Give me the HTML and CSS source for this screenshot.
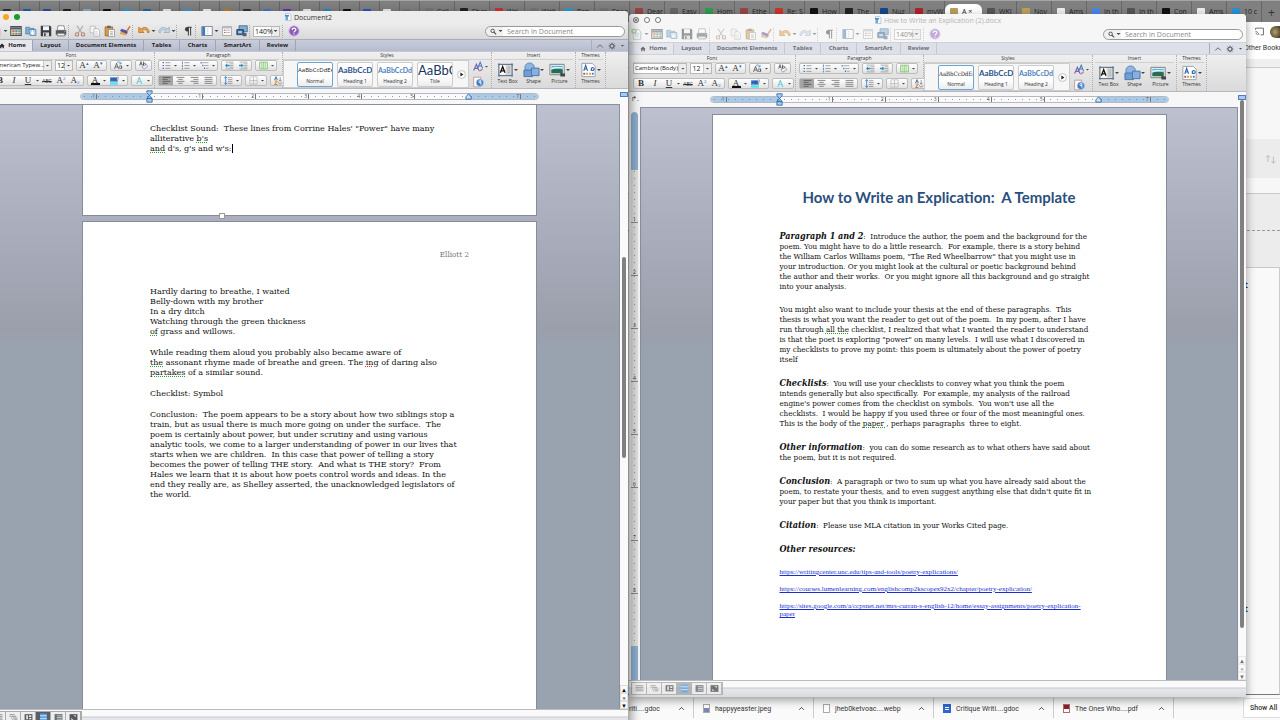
FILE: index.html
```html
<!DOCTYPE html>
<html lang="en">
<head>
    <meta charset="UTF-8">
    <meta name="viewport" content="width=device-width, initial-scale=1.0">
    <title>Document2</title>
    <link rel="stylesheet" href="styles.css">
</head>
<body>
    <!-- Icon sprite -->
    <svg class="sprite" aria-hidden="true">
        <symbol id="i-new" viewBox="0 0 16 16"><path d="M3 2h7l3 3v10H3z" fill="#fff" stroke="#7d8894"/><path d="M5 7h6M5 9h6M5 11h6" stroke="#9fb4c8"/><circle cx="4" cy="4" r="3.5" fill="#4fae45"/><path d="M4 2v4M2 4h4" stroke="#fff" stroke-width="1.2"/></symbol>
        <symbol id="i-grid" viewBox="0 0 16 16"><path d="M1 2h14v12H1z" fill="#e9e4d8" stroke="#4a4f57" stroke-width="1.4"/><path d="M1.5 3h13v3h-13z" fill="#555d68"/><path d="M3 7h3v2.500H3zM7 10.500h3V13H7z" fill="#cf6a35"/><path d="M7 7h3v2.500H7zM11 10.500h3V13h-3z" fill="#3f8fc4"/><path d="M11 7h3v2.500h-3zM3 10.500h3V13H3z" fill="#6da24b"/></symbol>
        <symbol id="i-open" viewBox="0 0 16 16"><path d="M1 3h5l1 1.500h5V12H1z" fill="#7fb2d9" stroke="#4d7ca6"/><path d="M5 6h9.500v8H7z" fill="#b4d3ea" stroke="#4d7ca6"/><path d="M10 7v5M8 10l2 2.500 2-2.500" fill="none" stroke="#fff" stroke-width="1.500"/></symbol>
        <symbol id="i-save" viewBox="0 0 16 16"><path d="M1 1h12.500L15 2.500V15H1z" fill="#3a3d42"/><path d="M4 1.500h8V7H4z" fill="#f5f5f5"/><path d="M4 10h8v5H4z" fill="#d7d7d7"/><path d="M5.500 11h2v3.500h-2z" fill="#333"/></symbol>
        <symbol id="i-print" viewBox="0 0 16 16"><path d="M4 1h8l1 6H3z" fill="#fff" stroke="#777"/><path d="M1 7h14v6H1z" fill="#54585e"/><path d="M3 11h10v3.500H3z" fill="#eee" stroke="#666"/><path d="M12 8.500h2" stroke="#66d05b"/></symbol>
        <symbol id="i-cut" viewBox="0 0 16 16"><path d="M4 1l6.500 10M12 1L5.500 11" stroke="#a7a7a7" stroke-width="1.500" fill="none"/><circle cx="4" cy="12.500" r="2.200" fill="none" stroke="#b9836f" stroke-width="1.500"/><circle cx="12" cy="12.500" r="2.200" fill="none" stroke="#b9836f" stroke-width="1.500"/></symbol>
        <symbol id="i-copy" viewBox="0 0 16 16"><path d="M1.500 1.500h7v9h-7z" fill="#f4f4f4" stroke="#b3b3b3"/><path d="M6.500 5h5l2.500 2.500V15H6.500z" fill="#fff" stroke="#a8a8a8"/><path d="M8 9h4M8 11h4M8 13h4" stroke="#c9c9c9"/></symbol>
        <symbol id="i-paste" viewBox="0 0 16 16"><path d="M1.500 2.500h10v12h-10z" fill="#d69a45" stroke="#91662a"/><path d="M4 1h5v3H4z" fill="#666"/><path d="M6 6h8v9.500H6z" fill="#fff" stroke="#888"/><path d="M8 9h4M8 11h4M8 13h4" stroke="#999"/></symbol>
        <symbol id="i-brush" viewBox="0 0 16 16"><path d="M10 7l4-6 1.500 1L12 8z" fill="#c8762d"/><path d="M3 6l8 1 1 3-3 4-8-2z" fill="#e3a651"/><path d="M2 7l9 4M3 6l8 3" stroke="#5750a8" stroke-width="2"/></symbol>
        <symbol id="i-undo" viewBox="0 0 16 16"><path d="M1 3v7h7L5.500 7.500C8 5 12 6 13 10.500l2-1C14 3 8 1.500 4 5.500z" fill="#eca24a" stroke="#b36d20"/></symbol>
        <symbol id="i-redo" viewBox="0 0 16 16"><path d="M15 3v7H8l2.500-2.500C8 5 4 6 3 10.500l-2-1C2 3 8 1.500 12 5.500z" fill="#c3d6e2" stroke="#92aabb"/></symbol>
        <symbol id="i-pilcrow" viewBox="0 0 16 16"><path d="M7 3h6M8.500 3v11M11.500 3v11" stroke="#3c3c3c" stroke-width="1.300"/><path d="M8.500 2.500H7a3 3 0 0 0 0 6h1.500z" fill="#3c3c3c"/></symbol>
        <symbol id="i-sidebar" viewBox="0 0 16 16"><path d="M1 2h14v12H1z" fill="#fff" stroke="#5a6f8c"/><path d="M1.500 2.500h4v11h-4z" fill="#4679b5"/><path d="M8 5h2M8 8h2M8 11h2" stroke="#9fb4c8"/></symbol>
        <symbol id="i-toolbox" viewBox="0 0 16 16"><path d="M2 2h12v12H2z" fill="#f8f8f8" stroke="#999"/><path d="M2 2h12v2.500H2z" fill="#b9bec6"/><path d="M4 7h2M4 10h2" stroke="#c75b4e" stroke-width="1.500"/><path d="M7 7h5M7 10h5" stroke="#aaa"/></symbol>
        <symbol id="i-media" viewBox="0 0 16 16"><path d="M4 1h11v8H4z" fill="#7eaed9" stroke="#3f5c7d"/><path d="M1 6h9v7H1z" fill="#39669c" stroke="#27405f"/><path d="M9 10l5 1v4H9z" fill="#4d5f73"/><path d="M3 8h5v3H3z" fill="#a7cbe8"/></symbol>
        <symbol id="i-help" viewBox="0 0 16 16"><circle cx="8" cy="8" r="7" fill="#8d5db8" stroke="#d8c7e6" stroke-width="1.500"/><path d="M5.500 6.500C5.500 3.500 10.500 3.500 10.500 6.300 10.500 8 8 8 8 10M8 11.300v1.500" stroke="#fff" stroke-width="1.600" fill="none"/></symbol>
        <symbol id="i-lens" viewBox="0 0 16 16"><circle cx="6" cy="6.500" r="4" fill="none" stroke="currentColor" stroke-width="2"/><path d="M9 9.500l5 5" stroke="currentColor" stroke-width="2.400"/></symbol>
        <symbol id="i-doc" viewBox="0 0 16 16"><path d="M3 1h8l3 3v11H3z" fill="#f4f9fd" stroke="#8aa2b8"/><path d="M2 4h8v3H7.500v7h-3V7H2z" fill="#3f8cca"/></symbol>
        <symbol id="i-home" viewBox="0 0 16 16"><path d="M8 1l7 7h-2v6H9.500v-4h-3v4H3V8H1z" fill="currentColor"/></symbol>
        <symbol id="i-gear" viewBox="0 0 16 16"><circle cx="8" cy="8" r="4" fill="none" stroke="currentColor" stroke-width="2.500"/><path d="M8 1v3M8 12v3M1 8h3M12 8h3M3 3l2 2M11 11l2 2M13 3l-2 2M5 11l-2 2" stroke="currentColor" stroke-width="1.600"/></symbol>
        <symbol id="i-up" viewBox="0 0 16 16"><path d="M2.500 11L8 5.500l5.500 5.500" fill="none" stroke="currentColor" stroke-width="2"/></symbol>
        <symbol id="i-case" viewBox="0 0 16 16"><path d="M1 14L4.500 4 8 14M2.500 10.500h4M13.500 8v6M13.500 11a2.300 2.300 0 1 0 0 .1" fill="none" stroke="#444" stroke-width="1.300"/><path d="M5 3c3-3 6-1 7 1.500M12.500 1.500V5H9" stroke="#3c83c9" stroke-width="1.300" fill="none"/></symbol>
        <symbol id="i-clear" viewBox="0 0 16 16"><path d="M1 8L3.500 1 6 8M2 5.500h3M8 1v7M8 6a2 2 0 1 1 0 .1" fill="none" stroke="#333" stroke-width="1.200"/><path d="M5 10l8-4 2.500 4-7 4.500z" fill="#eef1f8" stroke="#68739a"/></symbol>
        <symbol id="i-hilite" viewBox="0 0 16 16"><path d="M0 2h13v8H0z" fill="#4f85d6"/><path d="M2 8l1.500-4L5 8M6.500 4v4h2V4zM12 4.500h-2v3h2" stroke="#173e7e" fill="none"/><path d="M13 1l2 1-2 8" stroke="#666" fill="none"/><path d="M0 11h14v4.500H0z" fill="#52e4ec"/></symbol>
        <symbol id="i-bullets" viewBox="0 0 16 16"><path d="M1 3h2.500M1 8h2.500M1 13h2.500" stroke="#3b72b0" stroke-width="2.200"/><path d="M6 3h9M6 8h9M6 13h9" stroke="#777" stroke-width="1.200"/></symbol>
        <symbol id="i-numbers" viewBox="0 0 16 16"><path d="M2.500 1v4M2.500 6.500v4M2.500 12v3" stroke="#3b72b0" stroke-width="1.500"/><path d="M6 3h9M6 8h9M6 13h9" stroke="#777" stroke-width="1.200"/></symbol>
        <symbol id="i-multi" viewBox="0 0 16 16"><path d="M1 3h2M4 8h2M7 13h2" stroke="#3b72b0" stroke-width="2.500"/><path d="M4 3h11M7.500 8H15M11 13h4" stroke="#888" stroke-width="1.200"/></symbol>
        <symbol id="i-outdent" viewBox="0 0 16 16"><path d="M1 2h14M8 5h7M8 8h7M8 11h7M1 14h14" stroke="#777"/><path d="M0 8l4-4v2.500h4v3H4V12z" fill="#2f8fc0"/></symbol>
        <symbol id="i-indent" viewBox="0 0 16 16"><path d="M1 2h14M8 5h7M8 8h7M8 11h7M1 14h14" stroke="#777"/><path d="M8 8L4 4v2.500H0v3h4V12z" fill="#2f8fc0"/></symbol>
        <symbol id="i-columns" viewBox="0 0 16 16"><path d="M1 2h14v12H1z" fill="#dff3d8" stroke="#58a54c"/><path d="M8 2v12M5 2v12M11 2v12" stroke="#7bbf70"/></symbol>
        <symbol id="i-left" viewBox="0 0 16 16"><path d="M1 2.500h14M1 6h9M1 9.500h14M1 13h9" stroke="#444" stroke-width="1.200"/></symbol>
        <symbol id="i-center" viewBox="0 0 16 16"><path d="M1 2.500h14M4 6h8M1 9.500h14M4 13h8" stroke="#555" stroke-width="1.200"/></symbol>
        <symbol id="i-right" viewBox="0 0 16 16"><path d="M1 2.500h14M6 6h9M1 9.500h14M6 13h9" stroke="#555" stroke-width="1.200"/></symbol>
        <symbol id="i-justify" viewBox="0 0 16 16"><path d="M1 2.500h14M1 6h14M1 9.500h14M1 13h14" stroke="#555" stroke-width="1.200"/></symbol>
        <symbol id="i-spacing" viewBox="0 0 16 16"><path d="M7 3h8M7 6.500h8M7 10h8M7 13.500h8" stroke="#777" stroke-width="1.200"/><path d="M3 1v14M0.500 4L3 1l2.500 3M0.500 12L3 15l2.500-3" stroke="#3177c4" stroke-width="1.500" fill="none"/></symbol>
        <symbol id="i-borders" viewBox="0 0 16 16"><path d="M1.500 1.500h13v13h-13zM8 1.500v13M1.500 8h13" fill="none" stroke="#aaa"/></symbol>
        <symbol id="i-sort" viewBox="0 0 16 16"><path d="M1 7l2.500-6L6 7M2 5h3" stroke="#2e68b1" stroke-width="1.500" fill="none"/><path d="M1 9h5l-5 6h5" stroke="#d07b28" stroke-width="1.700" fill="none"/><path d="M11 2v7M8 11c0 4 6 4 6 0M9 7l2 2.500L13 7" stroke="#777" stroke-width="1.300" fill="none"/></symbol>
        <symbol id="i-styles" viewBox="0 0 16 16"><path d="M1 13L5 4l3.500 9M2.500 10H7" stroke="#7c63b4" stroke-width="1.700" fill="none"/><path d="M7 9l3.500-8L14 10M8 6.500h5" stroke="#3e7dc1" stroke-width="1.500" fill="none"/><path d="M9 14l5-3" stroke="#c47ab0" stroke-width="2"/></symbol>
        <symbol id="i-pane" viewBox="0 0 16 16"><path d="M1 1h10v14H1z" fill="#fff" stroke="#b77" /><circle cx="10" cy="9" r="5.500" fill="#3b7cc4" stroke="#c9dcf0"/><path d="M11.500 6v6M11.500 6H10a1.500 1.500 0 0 0 0 3h1.500" stroke="#fff" stroke-width="1.300" fill="none"/></symbol>
        <symbol id="i-textbox" viewBox="0 0 18 16"><path d="M2 2h14v12H2z" fill="#d5d7da" stroke="#555c66"/><path d="M3 3h6v10H3z" fill="#fff"/><path d="M3.500 11L6 4.500 8.500 11M4.500 9h3" stroke="#111" stroke-width="1.400" fill="none"/><path d="M11 5h3M11 7h3M11 9h3M11 11h3" stroke="#aaa"/><path d="M1 1h2v2H1zM15 1h2v2h-2zM1 13h2v2H1zM15 13h2v2h-2z" fill="#4a7fc0"/></symbol>
        <symbol id="i-shape" viewBox="0 0 18 16"><circle cx="7" cy="5.500" r="5" fill="#8fb6e2" stroke="#5d86b8"/><path d="M1 8h9v7H1z" fill="#6f9dd4" stroke="#4a74a8"/><path d="M9 6h8v8H9z" fill="#86b0e0" stroke="#4a74a8"/></symbol>
        <symbol id="i-picture" viewBox="0 0 18 16"><path d="M1 2h15v11H1z" fill="#fff" stroke="#777"/><path d="M2.500 3.500h12v8h-12z" fill="#58b3e3"/><path d="M2.500 8c4-2 8-2 12-.5v4h-12z" fill="#2b6c4b"/><path d="M2.500 6.500c4-2 8 0 12-1" stroke="#eaf8ff" stroke-width="1.500" fill="none"/><path d="M12 11l5 1v3h-5z" fill="#444"/></symbol>
        <symbol id="i-themes" viewBox="0 0 18 16"><path d="M2 1h11l3 3v11H2z" fill="#fff" stroke="#9aa0a8"/><path d="M4 9l2-6 2 6M5 7h2.500M12 5.500V9M12 7a1.500 1.500 0 1 1 0 .1" stroke="#2e68b1" stroke-width="1.200" fill="none"/><path d="M3.500 11h2v2h-2z" fill="#c0504d"/><path d="M6.500 11h2v2h-2z" fill="#9bbb59"/><path d="M9.500 11h2v2h-2z" fill="#f79646"/><path d="M12.500 11h2v2h-2z" fill="#4f81bd"/></symbol>
        <symbol id="i-play" viewBox="0 0 16 16"><circle cx="8" cy="8" r="7" fill="#fff" stroke="#999"/><path d="M6 4.500l5.500 3.500L6 11.500z" fill="#222"/></symbol>
        <symbol id="i-draft" viewBox="0 0 16 16"><path d="M1 3h14M1 6h14M1 9h14M1 12h14" stroke="#777" stroke-width="1.300"/></symbol>
        <symbol id="i-outline" viewBox="0 0 16 16"><path d="M1 3h9M4 6h9M7 9h8M9 12h6" stroke="#777" stroke-width="1.300"/><path d="M1 6h1.500M4 9h1.500M6 12h1.500" stroke="#555" stroke-width="1.500"/></symbol>
        <symbol id="i-publish" viewBox="0 0 16 16"><path d="M1 2h14v11H1z" fill="#5f6266"/><path d="M4 4h3v7H4zM9 4h4v3H9zM9 9h4v2H9z" fill="#e4e4e4"/></symbol>
        <symbol id="i-layout" viewBox="0 0 16 16"><path d="M2 1h12v14H2z" fill="#5d9fd9"/><path d="M2 5h12M2 10h12" stroke="#d6ebfb" stroke-width="1.600"/></symbol>
        <symbol id="i-notebook" viewBox="0 0 16 16"><path d="M1 2h14v12H1z" fill="#6a6d71"/><path d="M5 5h9M5 8h9M5 11h9" stroke="#e8e8e8" stroke-width="1.300"/></symbol>
        <symbol id="i-full" viewBox="0 0 16 16"><path d="M1 2h14v12H1z" fill="#55585c"/><path d="M4 9v3h4zM12 7V4H8z" fill="#eee"/></symbol>
        <symbol id="i-marker" viewBox="0 0 8 14"><path d="M1 .5h6v2L4 6 1 2.500zM1 13.500v-4h6v4zM1 9l3-3 3 3z" fill="#a9cdee" stroke="#2f6aa8"/></symbol>
        <symbol id="i-stop" viewBox="0 0 8 8"><path d="M1 7V4.500L4 1l3 3.500V7z" fill="#cfe3f6" stroke="#2f6aa8"/></symbol>
        <symbol id="i-cast" viewBox="0 0 16 16"><path d="M1 5V2h14v12h-5M1 8c3 0 6 3 6 6M1 11c1.500 0 3 1.500 3 3" fill="none" stroke="#5f6368" stroke-width="1.600"/></symbol>
        <symbol id="i-swap" viewBox="0 0 20 16"><path d="M5 13V2M1.500 5.500L5 2l3.500 3.500M14 4v11M10.500 11.500L14 15l3.500-3.500" fill="none" stroke="#bbb" stroke-width="1.600"/></symbol>
    </svg>

    <!-- Toolbar, tabs and ribbon, shared by both windows -->
    <template id="chrome">
        <div class="toolbar">
            <div class="tools">
                <button aria-label="New"><svg><use href="#i-new"/></svg></button><i class="caret"></i>
                <button aria-label="Gallery"><svg><use href="#i-grid"/></svg></button>
                <button aria-label="Open"><svg><use href="#i-open"/></svg></button>
                <button aria-label="Save"><svg><use href="#i-save"/></svg></button>
                <button aria-label="Print"><svg><use href="#i-print"/></svg></button>
                <i class="sep"></i>
                <button aria-label="Cut"><svg><use href="#i-cut"/></svg></button>
                <button aria-label="Copy"><svg><use href="#i-copy"/></svg></button>
                <button aria-label="Paste"><svg><use href="#i-paste"/></svg></button>
                <button aria-label="Format"><svg><use href="#i-brush"/></svg></button>
                <i class="sep"></i>
                <button aria-label="Undo"><svg><use href="#i-undo"/></svg></button><i class="caret"></i>
                <button aria-label="Redo"><svg><use href="#i-redo"/></svg></button><i class="caret"></i>
                <i class="sep"></i>
                <button aria-label="Show marks"><svg><use href="#i-pilcrow"/></svg></button>
                <i class="sep"></i>
                <button aria-label="Sidebar"><svg><use href="#i-sidebar"/></svg></button><i class="caret"></i>
                <button aria-label="Toolbox"><svg><use href="#i-toolbox"/></svg></button>
                <button aria-label="Media"><svg><use href="#i-media"/></svg></button>
                <i class="sep"></i>
                <span class="combo zoom"><select aria-label="Zoom"><option>140%</option></select><i class="caret"></i></span>
                <i class="sep"></i>
                <button aria-label="Help"><svg><use href="#i-help"/></svg></button>
            </div>
            <label class="search"><svg><use href="#i-lens"/></svg><i class="caret"></i><input type="text" placeholder="Search in Document" aria-label="Search in Document"></label>
        </div>
        <nav class="tabs">
            <button class="tab active"><svg><use href="#i-home"/></svg>Home</button>
            <button class="tab">Layout</button>
            <button class="tab tab-wide">Document Elements</button>
            <button class="tab">Tables</button>
            <button class="tab">Charts</button>
            <button class="tab tab-mid">SmartArt</button>
            <button class="tab">Review</button>
            <div class="tabs-end"><svg><use href="#i-up"/></svg><svg><use href="#i-gear"/></svg><i class="caret"></i></div>
        </nav>
        <div class="ribbon">
            <section class="group group-font">
                <h2>Font</h2>
                <div class="row">
                    <span class="combo font-name"><select aria-label="Font name"><option></option></select><i class="caret"></i></span>
                    <span class="combo font-size"><select aria-label="Font size"><option>12</option></select><i class="caret"></i></span>
                    <div class="set"><button class="serif">A<sup>▴</sup></button><button class="serif">A<sup>▾</sup></button></div>
                    <div class="set"><button aria-label="Change case"><svg><use href="#i-case"/></svg></button><i class="caret"></i></div>
                    <div class="set"><button aria-label="Clear formatting"><svg><use href="#i-clear"/></svg></button></div>
                </div>
                <div class="row">
                    <div class="set"><button class="serif"><b>B</b></button><button class="serif"><i>I</i></button><button class="serif"><u>U</u></button><i class="caret"></i><button class="tiny"><s>ABC</s></button><button class="serif">A<sup>2</sup></button><button class="serif">A<sub>2</sub></button></div>
                    <div class="set"><button class="serif ink">A</button><i class="caret"></i><button aria-label="Highlight"><svg><use href="#i-hilite"/></svg></button><i class="caret"></i></div>
                    <div class="set"><button class="glow">A</button><i class="caret"></i></div>
                </div>
            </section>
            <section class="group group-para">
                <h2>Paragraph</h2>
                <div class="row">
                    <div class="set"><button aria-label="Bullets"><svg><use href="#i-bullets"/></svg></button><i class="caret"></i><button aria-label="Numbering"><svg><use href="#i-numbers"/></svg></button><i class="caret"></i><button aria-label="Multilevel list"><svg><use href="#i-multi"/></svg></button><i class="caret"></i></div>
                    <div class="set"><button aria-label="Decrease indent"><svg><use href="#i-outdent"/></svg></button><button aria-label="Increase indent"><svg><use href="#i-indent"/></svg></button></div>
                    <div class="set"><button aria-label="Columns"><svg><use href="#i-columns"/></svg></button><i class="caret"></i></div>
                </div>
                <div class="row">
                    <div class="set"><button class="pressed" aria-label="Align left"><svg><use href="#i-left"/></svg></button><button aria-label="Center"><svg><use href="#i-center"/></svg></button><button aria-label="Align right"><svg><use href="#i-right"/></svg></button><button aria-label="Justify"><svg><use href="#i-justify"/></svg></button></div>
                    <div class="set"><button aria-label="Line spacing"><svg><use href="#i-spacing"/></svg></button><i class="caret"></i></div>
                    <div class="set"><button aria-label="Borders"><svg><use href="#i-borders"/></svg></button><i class="caret"></i></div>
                    <div class="set"><button aria-label="Sort"><svg><use href="#i-sort"/></svg></button></div>
                </div>
            </section>
            <section class="group group-styles">
                <h2>Styles</h2>
                <div class="styles-body">
                    <div class="gallery">
                        <button class="style chosen"><span class="sample s-normal">AaBbCcDdEe</span><span>Normal</span></button>
                        <button class="style"><span class="sample s-h1">AaBbCcDc</span><span>Heading 1</span></button>
                        <button class="style"><span class="sample s-h2">AaBbCcDdEe</span><span>Heading 2</span></button>
                        <button class="style style-title"><span class="sample s-title">AaBbC</span><span>Title</span></button>
                        <button class="more" aria-label="More styles"><svg><use href="#i-play"/></svg></button>
                    </div>
                    <div class="stack"><button aria-label="Change styles"><svg><use href="#i-styles"/></svg><i class="caret"></i></button><button aria-label="Styles pane"><svg><use href="#i-pane"/></svg></button></div>
                </div>
            </section>
            <section class="group group-insert">
                <h2>Insert</h2>
                <div class="bigs">
                    <button class="big"><svg><use href="#i-textbox"/></svg><i class="caret"></i><span>Text Box</span></button>
                    <button class="big"><svg><use href="#i-shape"/></svg><i class="caret"></i><span>Shape</span></button>
                    <button class="big"><svg><use href="#i-picture"/></svg><i class="caret"></i><span>Picture</span></button>
                </div>
            </section>
            <section class="group group-themes">
                <h2>Themes</h2>
                <div class="bigs">
                    <button class="big"><svg><use href="#i-themes"/></svg><i class="caret"></i><span>Themes</span></button>
                </div>
            </section>
        </div>
    </template>

    <template id="ruler">
        <div class="ruler">
            <div class="margin-zone start"><span class="inch-part">1</span></div>
            <div class="scale"><svg class="marker"><use href="#i-marker"/></svg><span class="inch">1</span><span class="inch">2</span><span class="inch">3</span><span class="inch">4</span><span class="inch">5</span><svg class="marker stop"><use href="#i-stop"/></svg></div>
            <div class="margin-zone end"><span class="inch">7</span></div>
        </div>
    </template>

    <template id="scrollbar">
        <div class="scrollbar">
            <i class="split"></i>
            <div class="track"><div class="thumb"></div></div>
            <div class="nav"><span>▲</span><span>●</span><span>▼</span></div>
        </div>
    </template>

    <template id="statusbar">
        <div class="views">
            <button aria-label="Draft"><svg><use href="#i-draft"/></svg></button>
            <button aria-label="Outline"><svg><use href="#i-outline"/></svg></button>
            <button aria-label="Publishing"><svg><use href="#i-publish"/></svg></button>
            <button class="on" aria-label="Print layout"><svg><use href="#i-layout"/></svg></button>
            <button aria-label="Notebook"><svg><use href="#i-notebook"/></svg></button>
            <button aria-label="Full screen"><svg><use href="#i-full"/></svg></button>
        </div>
    </template>

    <!-- Browser in the background -->
    <div class="browser">
        <div class="tabstrip" id="tabstrip"></div>
        <div class="browser-bar"><svg><use href="#i-cast"/></svg><i class="avatar"></i></div>
        <div class="bookmarks">Other Bookm</div>
        <div class="site">
            <div class="site-band head"></div>
            <div class="site-band tools-band"><svg><use href="#i-swap"/></svg></div>
            <div class="site-band gap"></div>
            <div class="site-band dash"></div>
            <div class="site-band shade"></div>
            <div class="site-body"><span>t</span><span>t</span></div>
        </div>
        <div class="downloads">
            <div class="download first"><span>riti....gdoc</span><svg><use href="#i-up"/></svg></div>
            <div class="download"><i class="file jpeg"></i><span>happyyeaster.jpeg</span><svg><use href="#i-up"/></svg></div>
            <div class="download"><i class="file plain"></i><span>jheb0ketvoac....webp</span><svg><use href="#i-up"/></svg></div>
            <div class="download"><i class="file gdoc"></i><span>Critique Writi....gdoc</span><svg><use href="#i-up"/></svg></div>
            <div class="download"><i class="file pdf"></i><span>The Ones Who....pdf</span><svg><use href="#i-up"/></svg></div>
            <button class="show-all">Show All</button>
        </div>
    </div>

    <!-- Template document -->
    <div class="window window-right inactive" data-font="Cambria (Body)">
        <header class="titlebar"><div class="lights"><i></i><i></i><i></i></div><svg><use href="#i-doc"/></svg>How to Write an Explication (2).docx</header>
        <div class="chrome"></div>
        <div class="workspace">
            <div class="corner">↱.</div>
            <div class="ruler-row"></div>
            <div class="v-ruler"><b></b><span>1</span><span>2</span><span>3</span><span>4</span><span>5</span><span>6</span><span>7</span><span>8</span><b class="foot"></b></div>
            <div class="view">
                <article class="page template-page">
                    <h1>How to Write an Explication: &nbsp;A Template</h1>
                    <p><strong>Paragraph 1 and 2</strong>: &nbsp;Introduce the author, the poem and the background for the<br>poem. You might have to do a little research.&nbsp; For example, there is a story behind<br>the William Carlos Williams poem, "The Red Wheelbarrow" that you might use in<br>your introduction. Or you might look at the cultural or poetic background behind<br>the author and their works.&nbsp; Or you might ignore all this background and go straight<br>into your analysis.</p>
                    <p>You might also want to include your thesis at the end of these paragraphs.&nbsp; This<br>thesis is what you want the reader to get out of the poem.&nbsp; In my poem, after I have<br>run through <span class="grammar">all the</span> checklist, I realized that what I wanted the reader to understand<br>is that the poet is exploring "power" on many levels.&nbsp; I will use what I discovered in<br>my checklists to prove my point: this poem is ultimately about the power of poetry<br>itself</p>
                    <p><strong>Checklists</strong>: &nbsp;You will use your checklists to convey what you think the poem<br>intends generally but also specifically.&nbsp; For example, my analysis of the railroad<br>engine's power comes from the checklist on symbols.&nbsp; You won't use all the<br>checklists.&nbsp; I would be happy if you used three or four of the most meaningful ones.<br>This is the body of the <span class="grammar">paper ,</span> perhaps paragraphs &nbsp;three to eight.</p>
                    <p><strong>Other information</strong>: &nbsp;you can do some research as to what others have said about<br>the poem, but it is not required.</p>
                    <p><strong>Conclusion</strong>: &nbsp;A paragraph or two to sum up what you have already said about the<br>poem, to restate your thesis, and to even suggest anything else that didn't quite fit in<br>your paper but that you think is important.</p>
                    <p><strong>Citation</strong>: &nbsp;Please use MLA citation in your Works Cited page.</p>
                    <p><strong>Other resources:</strong></p>
                    <ul class="links">
                        <li><a href="#">https://writingcenter.unc.edu/tips-and-tools/poetry-explications/</a></li>
                        <li><a href="#">https://courses.lumenlearning.com/englishcomp2kscopex92x2/chapter/poetry-explication/</a></li>
                        <li><a href="#">https://sites.google.com/a/ccpsnet.net/mrs-curran-s-english-12/home/essay-assignments/poetry-explication-<br>paper</a></li>
                    </ul>
                </article>
            </div>
        </div>
        <footer class="statusbar"></footer>
    </div>

    <!-- Student essay -->
    <div class="window window-left" data-font="American Typew...">
        <header class="titlebar"><div class="lights"><i></i><i></i><i></i></div><svg><use href="#i-doc"/></svg>Document2</header>
        <div class="chrome"></div>
        <div class="workspace">
            <div class="corner"></div>
            <div class="ruler-row"></div>
            <div class="v-ruler"></div>
            <div class="view">
                <article class="page essay-page essay-end">
                    <p>Checklist Sound: &nbsp;These lines from Corrine Hales' "Power" have many<br>alliterative <span class="grammar">b's</span><br><span class="grammar">and</span> d's, g's and w's:<i class="cursor"></i></p>
                    <i class="break-handle"></i>
                </article>
                <article class="page essay-page essay-next">
                    <div class="page-head">Elliott 2</div>
                    <p>Hardly daring to breathe, I waited<br>Belly-down with my brother<br>In a dry ditch<br>Watching through the green thickness<br><span class="grammar">of</span> grass and willows.</p>
                    <p>While reading them aloud you probably also became aware of<br><span class="grammar">the</span> assonant rhyme made of breathe and green. The <span class="spelling">ing</span> of daring also<br><span class="grammar">partakes</span> of a similar sound.</p>
                    <p>Checklist: Symbol</p>
                    <p>Conclusion: &nbsp;The poem appears to be a story about how two siblings stop a<br>train, but as usual there is much more going on under the surface.&nbsp; The<br>poem is certainly about power, but under scrutiny and using various<br>analytic tools, we come to a larger understanding of power in our lives that<br>starts when we are children.&nbsp; In this case that power of telling a story<br>becomes the power of telling THE story.&nbsp; And what is THE story?&nbsp; From<br>Hales we learn that it is about how poets control words and ideas. In the<br>end they really are, as Shelley asserted, the unacknowledged legislators of<br>the world.</p>
                </article>
            </div>
        </div>
        <footer class="statusbar"></footer>
    </div>

    <script src="script.js"></script>
</body>
</html>
```

FILE: styles.css
```css
* {
    margin: 0;
    padding: 0;
    box-sizing: border-box;
}

body {
    font-family: "Open Sans", "Noto Sans", sans-serif;
    font-size: 7px;
    color: #333;
    height: 100vh;
    overflow: hidden;
    position: relative;
}

.sprite {
    display: none;
}

button {
    font: inherit;
    color: inherit;
    background: none;
    border: 0;
}

button, label {
    display: flex;
    align-items: center;
    justify-content: center;
}

svg {
    display: block;
    flex: none;
    width: 12px;
    height: 12px;
}

.caret {
    flex: none;
    width: 5px;
    height: 2px;
    background: #444;
    clip-path: polygon(10% 0, 90% 0, 50% 100%);
}

/* ---------- browser behind ---------- */
.browser {
    height: 100%;
    display: flex;
    flex-direction: column;
    background: #f7f7f7;
}

.tabstrip {
    flex: none;
    height: 22px;
    display: flex;
    background: #808080;
    border-top: 1px solid #a5a5a5;
    overflow: hidden;
}

.btab {
    flex: none;
    width: 35px;
    padding: 5px 0 0 5px;
    display: flex;
    gap: 4px;
    color: #222;
    font-size: 7px;
    line-height: 12px;
    overflow: hidden;
    white-space: nowrap;
    border-right: 1px solid #666;
}

.btab i {
    flex: none;
    width: 8px;
    height: 8px;
    margin-top: 2px;
    border-radius: 1px;
}

.btab.pinned {
    width: 20px;
    padding: 6px 0 0 3px;
}

.btab.current {
    background: #fff;
    border-radius: 6px 6px 0 0;
    margin-top: 3px;
    padding-top: 2px;
    border: 0;
    width: 37px;
}

.new-tab {
    font-size: 12px;
    line-height: 24px;
    padding-left: 6px;
}

.browser-bar {
    flex: none;
    height: 19px;
    display: flex;
    align-items: center;
    justify-content: flex-end;
    gap: 6px;
    background: #fff;
}

.browser-bar svg {
    width: 9px;
    height: 9px;
}

.avatar {
    width: 10px;
    height: 12px;
    border-radius: 6px 0 0 6px;
    background: radial-gradient(#b3a06a, #3e3722);
}

.bookmarks {
    flex: none;
    height: 26px;
    width: 36px;
    align-self: flex-end;
    line-height: 14px;
    font-family: Roboto, sans-serif;
    font-size: 7px;
    white-space: nowrap;
    overflow: hidden;
    background: #fff;
    border-bottom: 8px solid #efefef;
}

.site {
    flex: 1;
    display: flex;
    flex-direction: column;
}

.site-band {
    background: #ececec;
}

.site-band.head {
    height: 72px;
    background: #f7f7f7;
    border-top: 1px solid #ccc;
}

.site-band.tools-band {
    height: 39px;
    display: flex;
    align-items: center;
    justify-content: flex-end;
    padding-right: 3px;
}

.site-band.gap {
    height: 16px;
    background: #f7f7f7;
    border-bottom: 1px solid #c9c9c9;
}

.site-band.dash {
    height: 37px;
    border-bottom: 1px dashed #999;
}

.site-band.shade {
    height: 37px;
    border-bottom: 1px solid #c9c9c9;
}

.site-body {
    flex: 1;
    display: flex;
    flex-direction: column;
    align-items: flex-end;
    justify-content: space-between;
    padding: 10px 31px 78px 0;
    background: #f9f9f9;
    border-right: 1px solid #ccc;
    border-bottom: 1px solid #777;
    font-size: 9px;
    font-weight: bold;
    line-height: 14px;
}

.downloads {
    flex: none;
    height: 25px;
    display: flex;
    align-items: center;
    padding-left: 628px;
    background: #fafafa;
}

.download {
    flex: none;
    width: 120px;
    height: 20px;
    display: flex;
    align-items: center;
    gap: 5px;
    padding: 2px 8px 0 9px;
    border-right: 1px solid #ccc;
}

.download span {
    flex: 1;
    font-family: Roboto, sans-serif;
    font-size: 7px;
    white-space: nowrap;
    text-align: left;
}

.download.first {
    width: 66px;
    padding-left: 1px;
}

.download svg {
    width: 7px;
    height: 7px;
}

.file {
    width: 7px;
    height: 9px;
    border: 1px solid #aaa;
    background: #fff;
}

.file.jpeg {
    background: linear-gradient(#fff 40%, #7a86b5 40%);
}

.file.gdoc {
    background: linear-gradient(#fff, #fff) 1px 2px / 4px 1px no-repeat, linear-gradient(#fff, #fff) 1px 4px / 4px 1px no-repeat, #2f65cf;
    border-color: #2f65cf;
    width: 8px;
}

.file.pdf {
    background: linear-gradient(#8d2027 50%, #fff 50%);
    border-color: #b06a6e;
}

.show-all {
    margin-left: auto;
    width: 37px;
    height: 20px;
    padding-left: 6px;
    border: 1px solid #ddd;
    border-right: 0;
    font-family: Roboto, sans-serif;
    font-size: 7px;
    font-weight: 500;
    background: #fff;
    white-space: nowrap;
    justify-content: flex-start;
}

/* ---------- windows ---------- */
.window {
    position: absolute;
    display: flex;
    flex-direction: column;
    overflow: hidden;
    background: #f5f5f5;
    border-radius: 4px 4px 0 0;
}

.window-left {
    left: -12px;
    top: 11px;
    bottom: -6px;
    width: 50%;
    box-shadow: 2px 4px 12px rgba(0, 0, 0, 0.5);
}

.window-right {
    left: 629px;
    right: 34px;
    top: 14px;
    bottom: 23px;
    box-shadow: 0 3px 10px rgba(0, 0, 0, 0.4);
}

.titlebar {
    flex: none;
    height: 12px;
    display: flex;
    align-items: center;
    justify-content: center;
    gap: 2px;
    position: relative;
    font-size: 7px;
    background: #ececec;
}

.titlebar > svg {
    width: 8px;
    height: 8px;
}

.lights {
    position: absolute;
    left: 4px;
    top: 3px;
    display: flex;
    gap: 5px;
}

.lights i {
    width: 6px;
    height: 6px;
    border-radius: 50%;
    background: #f0544c;
}

.lights i:nth-child(2) {
    background: #f6a623;
}

.lights i:nth-child(3) {
    background: #189c2c;
}

.inactive .lights i {
    background: #fff;
    border: 1px solid #777;
}

.inactive .lights i:first-child {
    background: #666;
    box-shadow: inset 0 0 0 1px #fff;
}

.inactive .titlebar {
    background: #f6f6f6;
    color: #b5b5b5;
}

.toolbar {
    height: 16px;
    display: flex;
    align-items: center;
    justify-content: space-between;
    padding-right: 3px;
    background: linear-gradient(#ececec, #d9d9d9);
}

.inactive .toolbar {
    background: #f6f6f6;
}

.inactive .tools {
    opacity: 0.5;
}

.tools {
    display: flex;
    align-items: center;
}

.tools button {
    width: 15px;
    height: 14px;
}

.sep {
    width: 4px;
    height: 13px;
    border-left: 1px dotted #aaa;
}

.combo {
    display: flex;
    align-items: center;
    height: 11px;
    background: linear-gradient(90deg, transparent calc(100% - 8px), #c9c9c9 0, #c9c9c9 calc(100% - 7px), #ededed 0), #fff;
    border: 1px solid #b9b9b9;
}

.combo select {
    flex: 1;
    min-width: 0;
    appearance: none;
    border: 0;
    background: none;
    font: inherit;
    line-height: 9px;
    color: #222;
    padding-left: 1px;
}

.combo .caret {
    margin-right: 1px;
}

.combo.zoom {
    width: 27px;
    margin-right: 2px;
}

.search {
    width: 140px;
    height: 11px;
    padding-left: 4px;
    gap: 1px;
    border: 1px solid #999;
    border-radius: 6px;
    background: linear-gradient(90deg, #f0f0f0 17px, #fff 17px);
    color: #444;
}

.search svg {
    width: 7px;
    height: 7px;
}

.search input {
    flex: 1;
    min-width: 0;
    height: 9px;
    margin-left: 3px;
    border: 0;
    background: none;
    font: inherit;
}

.search input::placeholder {
    color: #888;
}

.tabs {
    height: 13px;
    display: flex;
    padding-left: 5px;
    background: linear-gradient(#c9cddb, #b7bccd);
    border-top: 1px solid #a9adba;
    border-bottom: 1px solid #c5c8d3;
}

.inactive .tabs {
    background: #dde0e9;
    border-color: #cfd2da;
}

.tab {
    width: 36px;
    gap: 3px;
    font-size: 6px;
    font-weight: bold;
    line-height: 11px;
    color: #222;
    white-space: nowrap;
    border-right: 1px solid #a0a5b5;
}

.inactive .tab {
    color: #6c6c72;
    border-color: #c5c8d2;
}

.tab svg {
    width: 6px;
    height: 6px;
}

.tab-wide {
    width: 75px;
}

.tab-mid {
    width: 44px;
}

.tab.active {
    width: 40px;
    background: #e6e7ec;
}

.tabs-end {
    margin-left: auto;
    display: flex;
    align-items: center;
    gap: 4px;
    padding: 0 3px 0 4px;
    border-left: 1px solid #a9adba;
    color: #666;
}

.tabs-end svg {
    width: 8px;
    height: 8px;
}

.ribbon {
    height: 37px;
    display: flex;
    background: linear-gradient(#efefef, #dadada);
    border-bottom: 1px solid #b5b8c2;
}

.group {
    flex: none;
    padding: 0 4px;
    border-right: 1px dotted #b0b0b0;
}

.group h2 {
    height: 8px;
    font-size: 5px;
    font-weight: normal;
    line-height: 7px;
    text-align: center;
    border-bottom: 1px solid #d0d0d0;
}

.group-font {
    width: 167px;
}

.group-para {
    width: 128px;
    padding: 0 3px;
}

.row {
    display: flex;
    gap: 3px;
    height: 11px;
    margin-bottom: 4px;
}

.set {
    display: flex;
    align-items: center;
    padding-right: 1px;
    border: 1px solid #bdbdbd;
    border-radius: 2px;
    background: linear-gradient(#fff, #e2e2e2);
}

.set button {
    width: 14px;
    height: 9px;
}

.set svg {
    width: 11px;
    height: 9px;
}

.set button.pressed {
    background: #a5a5a5;
}

.font-name {
    width: 61px;
}

.font-name select {
    font-size: 6px;
}

.font-size {
    width: 24px;
}

.serif {
    font-family: "Liberation Serif", serif;
    font-size: 9px;
    line-height: 9px;
}

.serif sup, .serif sub {
    font-size: 5px;
    line-height: 5px;
    color: #2f6fc0;
    align-self: flex-start;
}

.serif sub {
    align-self: flex-end;
}

.set .ink {
    background: linear-gradient(#111, #111) 50% 100% / 9px 2px no-repeat;
}

.tiny {
    font-size: 5px;
}

.glow {
    color: #43c4cf;
    font-size: 9px;
    line-height: 9px;
}

.styles-body {
    display: flex;
    align-items: center;
    gap: 4px;
}

.group-styles {
    padding: 0;
}

.gallery {
    display: flex;
    align-items: center;
    gap: 4px;
    height: 28px;
    padding: 0 2px 0 13px;
    background: #f6f6f6;
    border: 1px solid #ccc;
}

.style {
    flex-direction: column;
    width: 36px;
    height: 25px;
    overflow: hidden;
    font-size: 5px;
    line-height: 7px;
    background: linear-gradient(#fff 60%, #ececec);
    border: 1px solid #ccc;
    border-radius: 2px;
}

.style.chosen {
    border-color: #6aa5d8;
}

.sample {
    width: 34px;
    height: 15px;
    line-height: 15px;
    overflow: hidden;
    white-space: nowrap;
    text-align: left;
}

.s-normal {
    font-size: 6px;
    color: #222;
}

.inactive .s-normal {
    font-family: "DejaVu Serif Condensed", "DejaVu Serif", serif;
}

.s-h1 {
    font-family: Lato, sans-serif;
    font-size: 8px;
    font-weight: bold;
    color: #28508a;
}

.s-h2 {
    font-family: Lato, sans-serif;
    font-size: 7px;
    font-weight: bold;
    color: #4f81bd;
}

.s-title {
    font-family: Lato, sans-serif;
    font-size: 13px;
    color: #17365d;
}

.inactive .style-title {
    display: none;
}

.more svg {
    width: 9px;
    height: 9px;
}

.stack {
    display: flex;
    flex-direction: column;
    gap: 3px;
    width: 18px;
}

.stack button {
    justify-content: flex-start;
}

.stack svg {
    width: 11px;
    height: 12px;
}

.group-insert {
    width: 84px;
    padding: 0 2px;
}

.group-themes {
    width: 30px;
    padding: 0 2px;
}

.bigs {
    display: flex;
    justify-content: center;
}

.big {
    flex-wrap: wrap;
    width: 26px;
    height: 27px;
    align-content: center;
    font-size: 5px;
    line-height: 7px;
    white-space: nowrap;
}

.big svg {
    width: 17px;
    height: 16px;
}

/* ---------- document area ---------- */
.workspace {
    flex: 1;
    min-height: 0;
    display: grid;
    grid-template-columns: 11px 1fr 8px;
    grid-template-rows: 15px 1fr;
    background: #f7f7f7;
}

.corner {
    font-size: 7px;
    line-height: 14px;
    padding-left: 2px;
}

.ruler {
    display: flex;
    width: 459px;
    height: 7px;
    margin: 4px auto 0;
    border: 1px solid #b5bac2;
    border-radius: 4px;
    font-size: 5px;
    line-height: 5px;
    color: #555;
    background: radial-gradient(circle, #8f98a3 0, #8f98a3 0.5px, transparent 1px) 0 0 / 7px 5px, #fafafa;
}

.margin-zone {
    width: 69px;
    background: radial-gradient(circle, #6d94b8 0, #6d94b8 0.5px, transparent 1px) 0 0 / 7px 5px, #a9c9e6;
    border-radius: 3px 0 0 3px;
}

.margin-zone.end {
    width: 70px;
    border-radius: 0 3px 3px 0;
}

.scale {
    flex: 1;
    display: flex;
    position: relative;
}

.marker {
    position: absolute;
    left: -4px;
    top: -4px;
    width: 7px;
    height: 13px;
}

.marker.stop {
    left: auto;
    right: -4px;
    top: -1px;
    height: 7px;
}

.inch, .inch-part {
    display: block;
    width: 53px;
    text-align: right;
    padding-right: 1px;
    border-right: 1px solid #777;
}

.inch-part {
    width: 16px;
}

.v-ruler {
    margin: 5px 2px 0;
    display: flex;
    flex-direction: column;
    font-size: 5px;
    line-height: 6px;
    text-align: center;
    background: radial-gradient(circle, #999 0, #999 0.5px, transparent 1px) 0 0 / 7px 7px, #e3e3e3;
    border-radius: 4px 4px 0 0;
    overflow: hidden;
}

.v-ruler b {
    flex: none;
    height: 58px;
    background: #8fb1d3;
    border-radius: 4px 4px 0 0;
}

.v-ruler b.foot {
    height: 34px;
    margin-top: auto;
    border-radius: 0;
}

.v-ruler span {
    height: 53px;
    padding-top: 46px;
    border-bottom: 1px solid #888;
}

.view {
    grid-row: 2;
    grid-column: 2;
    min-height: 0;
    display: flex;
    flex-direction: column;
    align-items: center;
    gap: 7px;
    overflow: hidden;
    background: linear-gradient(#bcc0cf 0, #9b9fac 225px, #99a3af 242px);
    border: solid #8a90a0;
    border-width: 1px 1px 0;
}

.scrollbar {
    grid-row: 1 / 3;
    grid-column: 3;
    display: flex;
    flex-direction: column;
    background: #fafafa;
}

.split {
    height: 5px;
    margin-top: 3px;
    border: 1px solid #4d7fbf;
    background: #a9c9ee;
}

.track {
    flex: 1;
}

.thumb {
    width: 4px;
    margin-left: 2px;
    height: 95%;
    border-radius: 2px;
    background: #808080;
}

.window-left .track {
    padding-top: 160px;
}

.window-left .thumb {
    height: 47%;
}

.nav span {
    display: block;
    height: 8px;
    font-size: 6px;
    line-height: 8px;
    text-align: center;
    color: #111;
    border: 1px solid #ddd;
}

.nav span:nth-child(2) {
    color: #888;
}

.inactive .nav {
    opacity: 0.6;
}

.page {
    flex: none;
    width: 453px;
    padding: 0 67px;
    background: #fff;
    outline: 1px solid #868c9a;
    white-space: nowrap;
    color: #111;
}

.essay-page {
    font-family: "DejaVu Serif", serif;
    font-size: 8px;
    line-height: 10px;
}

.essay-page p {
    margin-bottom: 11px;
}

.essay-end {
    position: relative;
    height: 110px;
    padding-top: 19px;
}

.essay-next {
    flex: 1;
    padding-top: 28px;
}

.page-head {
    margin-bottom: 27px;
    font-family: "DejaVu Serif Condensed", "DejaVu Serif", serif;
    text-align: right;
    color: #777;
}

.break-handle {
    position: absolute;
    left: 136px;
    bottom: -4px;
    width: 6px;
    height: 6px;
    border: 1px solid #999;
    background: #fff;
}

.cursor {
    border-left: 1px solid #000;
}

.grammar, .spelling {
    text-decoration: underline dotted #2aa52a 1px;
    text-underline-offset: 1px;
}

.spelling {
    text-decoration-color: #e22;
}

.template-page {
    flex: 1;
    margin-top: 7px;
    padding-top: 71px;
    font-family: "DejaVu Serif Condensed", "DejaVu Serif", serif;
    font-size: 8px;
    line-height: 10px;
}

.template-page h1 {
    margin-bottom: 23px;
    font-family: Lato, sans-serif;
    font-size: 15px;
    line-height: 22px;
    text-align: center;
    color: #2a4f7c;
}

.template-page p {
    margin-bottom: 13px;
}

.template-page strong {
    font-size: 9px;
    font-style: italic;
}

.links {
    list-style: none;
    font-family: "Liberation Serif", serif;
    font-size: 7px;
    line-height: 8px;
}

.links li {
    margin-bottom: 9px;
}

.links a {
    color: #1a2fd0;
}

/* ---------- status bar ---------- */
.statusbar {
    flex: none;
    height: 17px;
    display: flex;
    padding: 1px 0 2px 2px;
    border-top: 1px solid #bbb;
    background: linear-gradient(#fafafa 6px, #c5c8cc 7px, #e6e7ea 8px, #d9dadd);
}

.views {
    display: flex;
    border: 1px solid #aaa;
    background: #eee;
}

.views button {
    width: 15px;
    border-right: 1px solid #aaa;
}

.views button.on {
    background: #55606c;
}

.inactive .views button.on {
    background: #a3a9b0;
}

.views svg {
    width: 9px;
    height: 9px;
}

.inactive .views {
    opacity: 0.8;
}
```

FILE: script.js
```js
// Fill every window with its own copy of the shared parts
function clone(id) {
    return document.getElementById(id).content.cloneNode(true);
}

document.querySelectorAll('.window').forEach(function (win) {
    win.querySelector('.chrome').append(clone('chrome'));
    win.querySelector('.ruler-row').append(clone('ruler'));
    win.querySelector('.workspace').append(clone('scrollbar'));
    win.querySelector('.statusbar').append(clone('statusbar'));
    win.querySelector('.font-name option').textContent = win.dataset.font;
});

// Browser tabs: a run of pinned ones, then the titled ones
const strip = document.getElementById('tabstrip');
const pinned = ['#333', '#1b5fb4', '#2a4fa0', '#222', '#8fb3c9', '#111', '#2aa0e0', '#26a', '#eee', '#3b9bdc', '#f4f4f4', '#c97b2a', '#333', '#3f78d8', '#6a2fb0', '#eee', '#1b8fc4', '#111', '#2456c8', '#eee'];
const titled = [
    ['Call', '#777'], ['Shar', '#222'], ['Wri', '#c33'], ['Writ', '#777'], ['Pap', '#2a9fd8'], ['Spec', '#777'],
    ['Dear', '#944'], ['Easy', '#666'], ['Hom', '#2d9c4f'], ['Ethe', '#944'], ['Re: S', '#c9352b'], ['How', '#111'],
    ['The', '#222'], ['Nuz', '#16468c'], ['myW', '#b3202a'], ['A ×', '#b9a05a'], ['WKI', '#555'], ['Nov', '#b9a05a'],
    ['Ams', '#eee'], ['In th', '#4a86e8'], ['In th', '#555'], ['Con', '#111'], ['Ams', '#eee'], ['10 c', '#2a8fd0']
];

function addTab(name, color, extra) {
    const tab = document.createElement('div');
    tab.className = 'btab ' + extra;
    const icon = document.createElement('i');
    icon.style.background = color;
    tab.append(icon, name);
    strip.append(tab);
}

pinned.forEach(color => addTab('', color, 'pinned'));
addTab('', '#777', 'pinned');
titled.forEach(([name, color]) => addTab(name, color, name === 'A ×' ? 'current' : ''));

const plus = document.createElement('div');
plus.className = 'new-tab';
plus.textContent = '+';
strip.append(plus);
```
